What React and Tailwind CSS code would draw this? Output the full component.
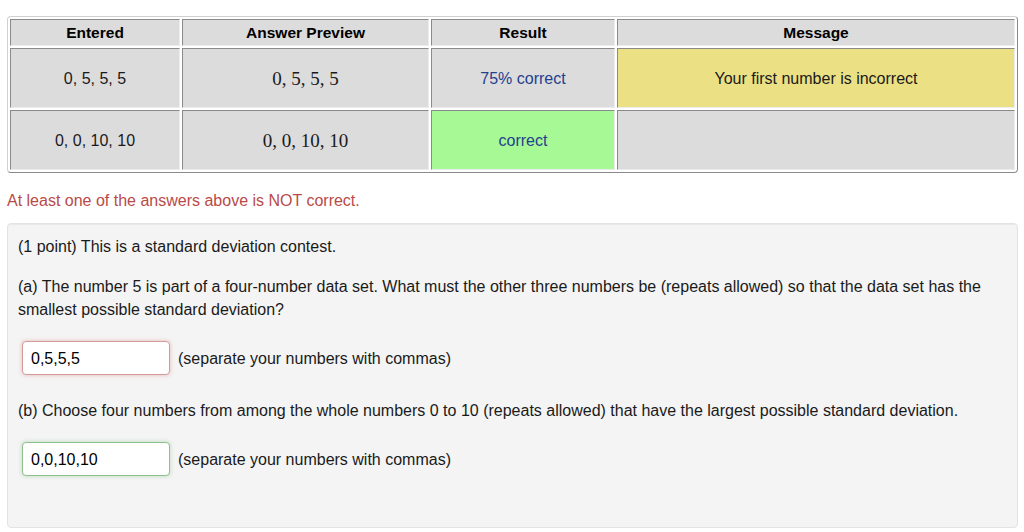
import React from 'react';

const rows = [
  { entered: '0, 5, 5, 5', preview: '0, 5, 5, 5', result: '75% correct', resultBg: 'bg-[#dcdcdc]', message: 'Your first number is incorrect', messageBg: 'bg-[#ece084]' },
  { entered: '0, 0, 10, 10', preview: '0, 0, 10, 10', result: 'correct', resultBg: 'bg-[#a7f995]', message: '', messageBg: 'bg-[#dcdcdc]' },
];

const cell = 'border border-t-[#8a8a8a] border-l-[#8a8a8a] border-r-[#ececec] border-b-[#ececec] text-center';

const App = () => {
  return (
    <div className="w-[1024px] h-[532px] bg-white overflow-hidden font-['Liberation_Sans',Arial,sans-serif] text-[16px] text-[#1a1a1a] px-[7px] pt-[16px]">
      {/* Results table */}
      <table className="w-[1011px] border-separate border-spacing-[2px] border border-t-[#d0d0d0] border-l-[#d0d0d0] border-r-[#8a8a8a] border-b-[#8a8a8a] rounded-[4px] table-fixed">
        <colgroup>
          <col className="w-[170px]" />
          <col className="w-[247px]" />
          <col className="w-[184px]" />
          <col />
        </colgroup>
        <thead>
          <tr className="h-[27px]">
            {['Entered', 'Answer Preview', 'Result', 'Message'].map((h) => (
              <th key={h} className={`${cell} bg-[#dcdcdc] font-bold text-[15.5px] text-black`}>{h}</th>
            ))}
          </tr>
        </thead>
        <tbody>
          {rows.map((r) => (
            <tr key={r.entered} className="h-[60px]">
              <td className={`${cell} bg-[#dcdcdc] pt-[2px]`}>{r.entered}</td>
              <td className={`${cell} bg-[#dcdcdc] pt-[2px] font-['Liberation_Serif','Times_New_Roman',serif] text-[19px]`}>{r.preview}</td>
              <td className={`${cell} ${r.resultBg} pt-[2px] text-[#24408f]`}>{r.result}</td>
              <td className={`${cell} ${r.messageBg} pt-[2px]`}>{r.message}</td>
            </tr>
          ))}
        </tbody>
      </table>

      <p className="text-[#b94a48] mt-[18px] leading-[20px]">At least one of the answers above is NOT correct.</p>

      {/* Problem body */}
      <div className="mt-[12px] w-[1011px] h-[305px] bg-[#f4f4f4] border border-[#e3e3e3] rounded-[4px] shadow-[inset_0_1px_1px_rgba(0,0,0,0.05)] px-[10px] pt-[11px] leading-[23px]">
        <p>(1 point) This is a standard deviation contest.</p>
        <p className="mt-[17px]">
          (a) The number 5 is part of a four-number data set. What must the other three numbers be (repeats allowed) so that the data set has the smallest possible standard deviation?
        </p>
        <div className="mt-[20px] flex items-center gap-[8px]">
          <div className="ml-[4px] w-[148px] h-[34px] bg-white border border-[#d49a99] rounded-[4px] shadow-[0_0_4px_rgba(200,80,80,0.35)] flex items-center px-[8px] text-black">0,5,5,5</div>
          <span>(separate your numbers with commas)</span>
        </div>
        <p className="mt-[24px]">
          (b) Choose four numbers from among the whole numbers 0 to 10 (repeats allowed) that have the largest possible standard deviation.
        </p>
        <div className="mt-[20px] flex items-center gap-[8px]">
          <div className="ml-[4px] w-[148px] h-[34px] bg-white border border-[#8fc08d] rounded-[4px] shadow-[0_0_4px_rgba(80,160,80,0.35)] flex items-center px-[8px] text-black">0,0,10,10</div>
          <span>(separate your numbers with commas)</span>
        </div>
      </div>
    </div>
  );
};

export default App;
